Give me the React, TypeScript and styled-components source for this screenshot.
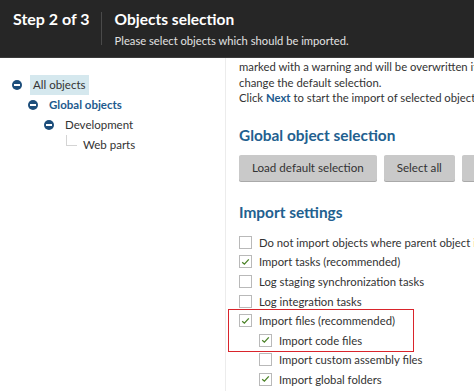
import React from 'react';
import styled, { createGlobalStyle } from 'styled-components';

const GlobalStyle = createGlobalStyle`
  html, body {
    margin: 0;
    padding: 0;
    background: #fff;
  }
  body {
    font-family: "Lato", "Open Sans", sans-serif;
    color: #333;
    overflow: hidden;
  }
`;

const Page = styled.div`
  width: 474px;
  height: 391px;
  display: flex;
  flex-direction: column;
  overflow: hidden;
`;

const Header = styled.header`
  height: 58px;
  flex: none;
  background: #262626;
  border-bottom: 1px solid #3a3a3a;
  display: flex;
  align-items: flex-start;
  padding: 0 0 0 13px;
  box-sizing: border-box;
`;

const StepLabel = styled.div`
  color: #fff;
  font-weight: 700;
  font-size: 16px;
  line-height: 20px;
  margin-top: 9px;
`;

const HeaderDivider = styled.div`
  width: 1px;
  height: 33px;
  background: #4a4a4a;
  margin: 12px 13px 0 11px;
`;

const TitleBlock = styled.div`
  display: flex;
  flex-direction: column;
  margin-top: 9px;
`;

const Title = styled.div`
  color: #fff;
  font-weight: 700;
  font-size: 15.5px;
  line-height: 20px;
`;

const Subtitle = styled.div`
  color: #e2e2e2;
  font-size: 11.2px;
  line-height: 16px;
  margin-top: 4px;
`;

const Body = styled.div`
  flex: 1;
  display: flex;
  min-height: 0;
`;

const Sidebar = styled.aside`
  width: 226px;
  flex: none;
  border-right: 1px solid #ececec;
  padding-top: 17px;
  box-sizing: border-box;
`;

const TreeRow = styled.div<{ $level: number }>`
  display: flex;
  align-items: center;
  height: 20px;
  padding-left: ${p => 12 + p.$level * 16}px;
  font-size: 11.5px;
`;

const Toggle = styled.span`
  width: 10px;
  height: 10px;
  border-radius: 50%;
  background: #1d4e7b;
  flex: none;
  display: flex;
  align-items: center;
  justify-content: center;
  margin-right: 8px;
  &::after {
    content: '';
    width: 6px;
    height: 2px;
    background: #fff;
  }
`;

const Connector = styled.span`
  width: 10px;
  height: 10px;
  align-self: flex-start;
  margin-left: 6px;
  border-left: 1px solid #d4d4d4;
  border-bottom: 1px solid #d4d4d4;
  margin-right: 3px;
`;

const NodeLabel = styled.span<{ $selected?: boolean; $bold?: boolean }>`
  padding: 0 3px;
  line-height: 20px;
  background: ${p => (p.$selected ? '#d5e8ee' : 'transparent')};
  color: ${p => (p.$bold ? '#1d5a8e' : '#333')};
  font-weight: ${p => (p.$bold ? 700 : 400)};
  white-space: nowrap;
`;

const Content = styled.main`
  flex: 1;
  min-width: 0;
  overflow: hidden;
  padding: 1px 0 0 13px;
  white-space: nowrap;
`;

const Paragraph = styled.div`
  font-size: 11.3px;
  line-height: 15.5px;
  color: #333;
`;

const Strong = styled.b`
  color: #1d5a8e;
`;

const SectionTitle = styled.h2<{ $gap: number }>`
  margin: ${p => p.$gap}px 0 0;
  font-size: 15.4px;
  line-height: 22px;
  font-weight: 700;
  color: #22608f;
`;

const ButtonRow = styled.div`
  display: flex;
  gap: 7px;
  margin-top: 9px;
`;

const Button = styled.button`
  flex: none;
  height: 26px;
  padding: 0 13px;
  border: none;
  border-radius: 2px;
  background: #c9c9c9;
  box-shadow: 0 1px 0 #a9a9a9;
  font-family: inherit;
  font-size: 11.6px;
  color: #333;
  cursor: pointer;
`;

const Options = styled.div`
  position: relative;
  margin-top: 10px;
  display: flex;
  flex-direction: column;
`;

const OptionRow = styled.label<{ $indent?: boolean }>`
  display: flex;
  align-items: center;
  height: 19.6px;
  padding-left: ${p => (p.$indent ? 20 : 0)}px;
  font-size: 11.3px;
  color: #333;
`;

const Box = styled.span`
  width: 11px;
  height: 11px;
  border: 1px solid #b9b9b9;
  background: #fff;
  flex: none;
  margin-right: 7px;
  display: flex;
  align-items: center;
  justify-content: center;
`;

const Highlight = styled.div`
  position: absolute;
  left: -11px;
  top: 76px;
  width: 186px;
  height: 43px;
  box-sizing: border-box;
  border: 1.5px solid #d9242b;
  pointer-events: none;
`;

const Check = () => (
  <svg width="9" height="8" viewBox="0 0 9 8">
    <path d="M1.2 4.2 L3.4 6.2 L7.8 1.4" fill="none" stroke="#4a8226" strokeWidth="1.3" />
  </svg>
);

const options = [
  { text: 'Do not import objects where parent object is missing', checked: false },
  { text: 'Import tasks (recommended)', checked: true },
  { text: 'Log staging synchronization tasks', checked: false },
  { text: 'Log integration tasks', checked: false },
  { text: 'Import files (recommended)', checked: true },
  { text: 'Import code files', checked: true, indent: true },
  { text: 'Import custom assembly files', checked: false, indent: true },
  { text: 'Import global folders', checked: true, indent: true },
];

const App = () => {
  return (
    <Page>
      <GlobalStyle />
      <Header>
        <StepLabel>Step 2 of 3</StepLabel>
        <HeaderDivider />
        <TitleBlock>
          <Title>Objects selection</Title>
          <Subtitle>Please select objects which should be imported.</Subtitle>
        </TitleBlock>
      </Header>
      <Body>
        <Sidebar>
          <TreeRow $level={0}>
            <Toggle />
            <NodeLabel $selected>All objects</NodeLabel>
          </TreeRow>
          <TreeRow $level={1}>
            <Toggle />
            <NodeLabel $bold>Global objects</NodeLabel>
          </TreeRow>
          <TreeRow $level={2}>
            <Toggle />
            <NodeLabel>Development</NodeLabel>
          </TreeRow>
          <TreeRow $level={3}>
            <Connector />
            <NodeLabel>Web parts</NodeLabel>
          </TreeRow>
        </Sidebar>
        <Content>
          <Paragraph>marked with a warning and will be overwritten if you do not</Paragraph>
          <Paragraph>change the default selection.</Paragraph>
          <Paragraph>
            Click <Strong>Next</Strong> to start the import of selected objects.
          </Paragraph>
          <SectionTitle $gap={18}>Global object selection</SectionTitle>
          <ButtonRow>
            <Button>Load default selection</Button>
            <Button>Select all</Button>
            <Button>Deselect all</Button>
          </ButtonRow>
          <SectionTitle $gap={20}>Import settings</SectionTitle>
          <Options>
            {options.map(o => (
              <OptionRow key={o.text} $indent={o.indent}>
                <Box>{o.checked && <Check />}</Box>
                {o.text}
              </OptionRow>
            ))}
            <Highlight />
          </Options>
        </Content>
      </Body>
    </Page>
  );
};

export default App;
